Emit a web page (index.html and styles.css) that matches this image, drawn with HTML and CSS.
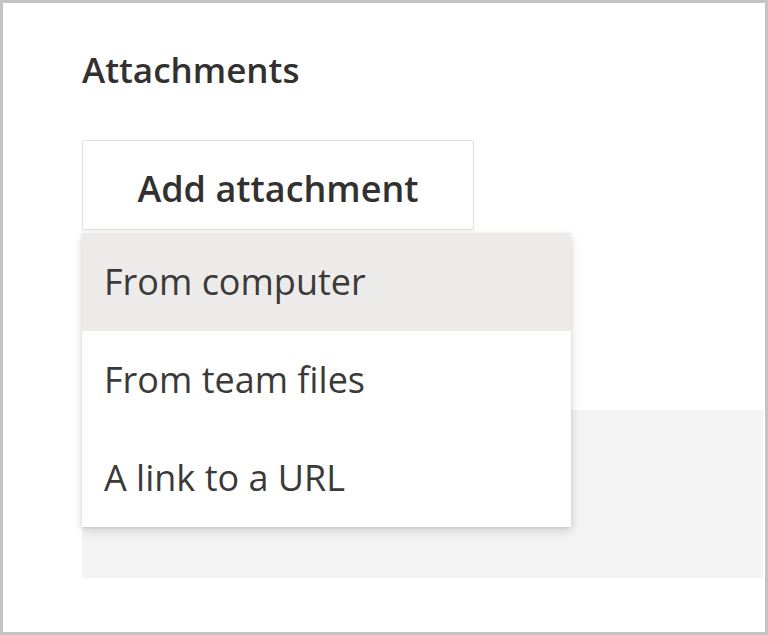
FILE: index.html
```html
<html>
    <head>
        <title>Attachments</title>

        <link rel="stylesheet" href="styles.css">
    </head>

    <body>
        <div class="frame">
            <div class="title">Attachments</div>
            <div class="attachWrap">
                <div class="addButton">Add attachment</div>
                <div class="menu">
                    <div class="menuItem active">From computer</div>
                    <div class="menuItem">From team files</div>
                    <div class="menuItem">A link to a URL</div>
                </div>
            </div>
            <div class="dropArea"></div>
        </div>
    </body>
</html>
```

FILE: styles.css
```css
body {
    margin: 0;
    background-color: white;
}
.frame {
    box-sizing: border-box;
    width: 768px;
    height: 635px;
    border: 3px solid #c4c4c4;
    padding: 42px 2px 0 79px;
    font-family: "Open Sans", "Noto Sans", sans-serif;
    font-size: 36px;
    color: #323130;
    background-color: white;
}
.title {
    font-size: 35px;
    font-weight: 600;
    line-height: 50px;
}
.attachWrap {
    position: relative;
    width: 392px;
    margin-top: 45px;
}
.addButton {
    box-sizing: border-box;
    height: 90px;
    padding: 23px 0 16px;
    line-height: 49px;
    text-align: center;
    font-weight: 600;
    color: #323130;
    border: 1px solid #e1e1e1;
    border-radius: 2px;
    background-color: white;
    box-shadow: 0 1px 2px rgba(0, 0, 0, 0.06);
}
.menu {
    position: absolute;
    top: 93px;
    left: 0;
    width: 489px;
    background-color: white;
    box-shadow: 0 4px 10px rgba(0, 0, 0, 0.14), 0 1px 3px rgba(0, 0, 0, 0.1);
    z-index: 2;
}
.menuItem {
    height: 98px;
    line-height: 98px;
    padding-left: 22px;
    color: #3b3a39;
}
.menuItem.active {
    background-color: #edebe9;
}
.dropArea {
    margin-top: 180px;
    height: 168px;
    background-color: #f3f3f3;
}
```
